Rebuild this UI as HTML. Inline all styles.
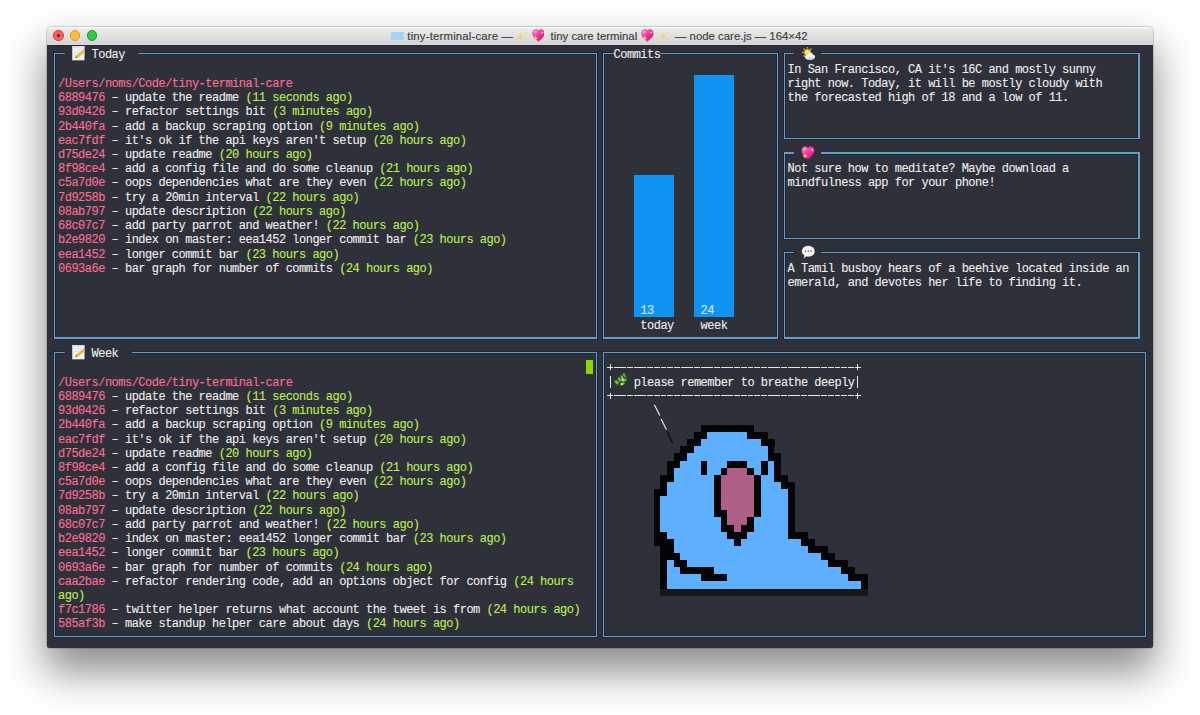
<!DOCTYPE html>
<html><head><meta charset="utf-8"><style>
html,body{margin:0;padding:0;background:#fff;width:1200px;height:715px;overflow:hidden;position:relative}
.win{position:absolute;left:47px;top:26.7px;width:1106px;height:621.3px;border-radius:4px 4px 3px 3px;background:#2f313a;box-shadow:0 22px 40px 2px rgba(0,0,0,0.45),0 0 0 0.5px rgba(0,0,0,0.3)}
.tb{position:absolute;left:47px;top:26.7px;width:1106px;height:18.3px;border-radius:4px 4px 0 0;background:linear-gradient(#eeeeee,#d5d5d5 92%,#dedde2);box-shadow:inset 0 1px 0 #fafafa}
.tbb{position:absolute;left:47px;top:45px;width:1106px;height:1px;background:#262530}
.t{position:absolute;white-space:pre;font-family:"Liberation Mono",monospace;font-size:12.0px;line-height:14.227px;letter-spacing:-0.507px;-webkit-text-stroke:0.1px currentColor}
.ln{position:absolute}
.dot{position:absolute;width:10.2px;height:10.2px;border-radius:50%}
.title{position:absolute;top:28.5px;height:15px;font-family:"Liberation Sans",sans-serif;font-size:11.4px;line-height:15px;color:#404040;-webkit-text-stroke:0.15px #404040;white-space:pre}
</style></head><body>
<div class="win"></div>
<div class="tb"></div>
<div class="tbb"></div>
<div class="dot" style="left:53.4px;top:30.4px;background:#fc605c;border:0.6px solid #d8403a;box-sizing:border-box"></div>
<div class="dot" style="left:70.15px;top:30.4px;background:#fdbc40;border:0.6px solid #d49a20;box-sizing:border-box"></div>
<div class="dot" style="left:86.9px;top:30.4px;background:#34c84a;border:0.6px solid #1e9a2c;box-sizing:border-box"></div>
<div style="position:absolute;left:56.6px;top:33.6px;width:3.8px;height:3.8px;border-radius:50%;background:#5a0806"></div>
<div style="position:absolute;left:391.3px;top:32px;width:12.4px;height:8.3px;background:#a3d4f2;border-radius:1px"></div>
<div class="title" style="left:407.3px;letter-spacing:0.17px">tiny-terminal-care</div><div class="title" style="left:501.5px">—</div>
<div class="title" style="left:550.5px">tiny care terminal</div>
<div class="title" style="left:675px">— node care.js — 164×42</div>
<div><div class="ln" style="left:53.17px;top:51.98px;width:12.46px;height:3.05px;background:rgba(22,38,58,0.75)"></div><div class="ln" style="left:137.46px;top:51.98px;width:460.90px;height:3.05px;background:rgba(22,38,58,0.75)"></div><div class="ln" style="left:53.17px;top:336.52px;width:545.18px;height:3.05px;background:rgba(22,38,58,0.75)"></div><div class="ln" style="left:53.17px;top:51.98px;width:3.05px;height:287.59px;background:rgba(22,38,58,0.75)"></div><div class="ln" style="left:595.30px;top:51.98px;width:3.05px;height:287.59px;background:rgba(22,38,58,0.75)"></div><div class="ln" style="left:53.17px;top:350.74px;width:12.46px;height:3.05px;background:rgba(22,38,58,0.75)"></div><div class="ln" style="left:130.77px;top:350.74px;width:467.59px;height:3.05px;background:rgba(22,38,58,0.75)"></div><div class="ln" style="left:53.17px;top:635.28px;width:545.18px;height:3.05px;background:rgba(22,38,58,0.75)"></div><div class="ln" style="left:53.17px;top:350.74px;width:3.05px;height:287.59px;background:rgba(22,38,58,0.75)"></div><div class="ln" style="left:595.30px;top:350.74px;width:3.05px;height:287.59px;background:rgba(22,38,58,0.75)"></div><div class="ln" style="left:602.00px;top:51.98px;width:12.46px;height:3.05px;background:rgba(22,38,58,0.75)"></div><div class="ln" style="left:659.51px;top:51.98px;width:119.55px;height:3.05px;background:rgba(22,38,58,0.75)"></div><div class="ln" style="left:602.00px;top:336.52px;width:177.07px;height:3.05px;background:rgba(22,38,58,0.75)"></div><div class="ln" style="left:602.00px;top:51.98px;width:3.05px;height:287.59px;background:rgba(22,38,58,0.75)"></div><div class="ln" style="left:776.02px;top:51.98px;width:3.05px;height:287.59px;background:rgba(22,38,58,0.75)"></div><div class="ln" style="left:782.71px;top:51.98px;width:12.46px;height:3.05px;background:rgba(22,38,58,0.75)"></div><div class="ln" style="left:820.14px;top:51.98px;width:320.34px;height:3.05px;background:rgba(22,38,58,0.75)"></div><div class="ln" style="left:782.71px;top:137.34px;width:357.78px;height:3.05px;background:rgba(22,38,58,0.75)"></div><div class="ln" style="left:782.71px;top:51.98px;width:3.05px;height:88.41px;background:rgba(22,38,58,0.75)"></div><div class="ln" style="left:1137.44px;top:51.98px;width:3.05px;height:88.41px;background:rgba(22,38,58,0.75)"></div><div class="ln" style="left:782.71px;top:151.56px;width:12.46px;height:3.05px;background:rgba(22,38,58,0.75)"></div><div class="ln" style="left:820.14px;top:151.56px;width:320.34px;height:3.05px;background:rgba(22,38,58,0.75)"></div><div class="ln" style="left:782.71px;top:236.93px;width:357.78px;height:3.05px;background:rgba(22,38,58,0.75)"></div><div class="ln" style="left:782.71px;top:151.56px;width:3.05px;height:88.41px;background:rgba(22,38,58,0.75)"></div><div class="ln" style="left:1137.44px;top:151.56px;width:3.05px;height:88.41px;background:rgba(22,38,58,0.75)"></div><div class="ln" style="left:782.71px;top:251.15px;width:12.46px;height:3.05px;background:rgba(22,38,58,0.75)"></div><div class="ln" style="left:820.14px;top:251.15px;width:320.34px;height:3.05px;background:rgba(22,38,58,0.75)"></div><div class="ln" style="left:782.71px;top:336.52px;width:357.78px;height:3.05px;background:rgba(22,38,58,0.75)"></div><div class="ln" style="left:782.71px;top:251.15px;width:3.05px;height:88.41px;background:rgba(22,38,58,0.75)"></div><div class="ln" style="left:1137.44px;top:251.15px;width:3.05px;height:88.41px;background:rgba(22,38,58,0.75)"></div><div class="ln" style="left:602.00px;top:350.74px;width:545.18px;height:3.05px;background:rgba(22,38,58,0.75)"></div><div class="ln" style="left:602.00px;top:635.28px;width:545.18px;height:3.05px;background:rgba(22,38,58,0.75)"></div><div class="ln" style="left:602.00px;top:350.74px;width:3.05px;height:287.59px;background:rgba(22,38,58,0.75)"></div><div class="ln" style="left:1144.13px;top:350.74px;width:3.05px;height:287.59px;background:rgba(22,38,58,0.75)"></div><div class="ln" style="left:54.07px;top:52.88px;width:10.66px;height:1.25px;background:#6a9cc8"></div><div class="ln" style="left:138.36px;top:52.88px;width:459.10px;height:1.25px;background:#6a9cc8"></div><div class="ln" style="left:54.07px;top:337.42px;width:543.38px;height:1.25px;background:#6a9cc8"></div><div class="ln" style="left:54.07px;top:52.88px;width:1.25px;height:285.79px;background:#6a9cc8"></div><div class="ln" style="left:596.20px;top:52.88px;width:1.25px;height:285.79px;background:#6a9cc8"></div><div class="ln" style="left:54.07px;top:351.64px;width:10.66px;height:1.25px;background:#6a9cc8"></div><div class="ln" style="left:131.67px;top:351.64px;width:465.79px;height:1.25px;background:#6a9cc8"></div><div class="ln" style="left:54.07px;top:636.18px;width:543.38px;height:1.25px;background:#6a9cc8"></div><div class="ln" style="left:54.07px;top:351.64px;width:1.25px;height:285.79px;background:#6a9cc8"></div><div class="ln" style="left:596.20px;top:351.64px;width:1.25px;height:285.79px;background:#6a9cc8"></div><div class="ln" style="left:602.90px;top:52.88px;width:10.66px;height:1.25px;background:#6a9cc8"></div><div class="ln" style="left:660.41px;top:52.88px;width:117.75px;height:1.25px;background:#6a9cc8"></div><div class="ln" style="left:602.90px;top:337.42px;width:175.27px;height:1.25px;background:#6a9cc8"></div><div class="ln" style="left:602.90px;top:52.88px;width:1.25px;height:285.79px;background:#6a9cc8"></div><div class="ln" style="left:776.92px;top:52.88px;width:1.25px;height:285.79px;background:#6a9cc8"></div><div class="ln" style="left:783.61px;top:52.88px;width:10.66px;height:1.25px;background:#6a9cc8"></div><div class="ln" style="left:821.04px;top:52.88px;width:318.54px;height:1.25px;background:#6a9cc8"></div><div class="ln" style="left:783.61px;top:138.24px;width:355.98px;height:1.25px;background:#6a9cc8"></div><div class="ln" style="left:783.61px;top:52.88px;width:1.25px;height:86.61px;background:#6a9cc8"></div><div class="ln" style="left:1138.34px;top:52.88px;width:1.25px;height:86.61px;background:#6a9cc8"></div><div class="ln" style="left:783.61px;top:152.46px;width:10.66px;height:1.25px;background:#6a9cc8"></div><div class="ln" style="left:821.04px;top:152.46px;width:318.54px;height:1.25px;background:#6a9cc8"></div><div class="ln" style="left:783.61px;top:237.83px;width:355.98px;height:1.25px;background:#6a9cc8"></div><div class="ln" style="left:783.61px;top:152.46px;width:1.25px;height:86.61px;background:#6a9cc8"></div><div class="ln" style="left:1138.34px;top:152.46px;width:1.25px;height:86.61px;background:#6a9cc8"></div><div class="ln" style="left:783.61px;top:252.05px;width:10.66px;height:1.25px;background:#6a9cc8"></div><div class="ln" style="left:821.04px;top:252.05px;width:318.54px;height:1.25px;background:#6a9cc8"></div><div class="ln" style="left:783.61px;top:337.42px;width:355.98px;height:1.25px;background:#6a9cc8"></div><div class="ln" style="left:783.61px;top:252.05px;width:1.25px;height:86.61px;background:#6a9cc8"></div><div class="ln" style="left:1138.34px;top:252.05px;width:1.25px;height:86.61px;background:#6a9cc8"></div><div class="ln" style="left:602.90px;top:351.64px;width:543.38px;height:1.25px;background:#6a9cc8"></div><div class="ln" style="left:602.90px;top:636.18px;width:543.38px;height:1.25px;background:#6a9cc8"></div><div class="ln" style="left:602.90px;top:351.64px;width:1.25px;height:285.79px;background:#6a9cc8"></div><div class="ln" style="left:1145.03px;top:351.64px;width:1.25px;height:285.79px;background:#6a9cc8"></div></div>
<div class="t" style="left:91.51px;top:48.40px;"><span style="color:#eeeeee">Today</span></div>
<div class="t" style="left:91.51px;top:347.17px;"><span style="color:#eeeeee">Week</span></div>
<div class="t" style="left:613.56px;top:48.40px;"><span style="color:#eeeeee">Commits</span></div>
<div class="t" style="left:58.04px;top:76.85px;"><span style="color:#ff6c96">/Users/noms/Code/tiny-terminal-care</span></div>
<div class="t" style="left:58.04px;top:91.08px;"><span style="color:#ff6c96">6889476</span><span style="color:#eeeeee"> – update the readme </span><span style="color:#bcf04e">(11 seconds ago)</span></div>
<div class="t" style="left:58.04px;top:105.31px;"><span style="color:#ff6c96">93d0426</span><span style="color:#eeeeee"> – refactor settings bit </span><span style="color:#bcf04e">(3 minutes ago)</span></div>
<div class="t" style="left:58.04px;top:119.54px;"><span style="color:#ff6c96">2b440fa</span><span style="color:#eeeeee"> – add a backup scraping option </span><span style="color:#bcf04e">(9 minutes ago)</span></div>
<div class="t" style="left:58.04px;top:133.76px;"><span style="color:#ff6c96">eac7fdf</span><span style="color:#eeeeee"> – it's ok if the api keys aren't setup </span><span style="color:#bcf04e">(20 hours ago)</span></div>
<div class="t" style="left:58.04px;top:147.99px;"><span style="color:#ff6c96">d75de24</span><span style="color:#eeeeee"> – update readme </span><span style="color:#bcf04e">(20 hours ago)</span></div>
<div class="t" style="left:58.04px;top:162.22px;"><span style="color:#ff6c96">8f98ce4</span><span style="color:#eeeeee"> – add a config file and do some cleanup </span><span style="color:#bcf04e">(21 hours ago)</span></div>
<div class="t" style="left:58.04px;top:176.44px;"><span style="color:#ff6c96">c5a7d0e</span><span style="color:#eeeeee"> – oops dependencies what are they even </span><span style="color:#bcf04e">(22 hours ago)</span></div>
<div class="t" style="left:58.04px;top:190.67px;"><span style="color:#ff6c96">7d9258b</span><span style="color:#eeeeee"> – try a 20min interval </span><span style="color:#bcf04e">(22 hours ago)</span></div>
<div class="t" style="left:58.04px;top:204.90px;"><span style="color:#ff6c96">08ab797</span><span style="color:#eeeeee"> – update description </span><span style="color:#bcf04e">(22 hours ago)</span></div>
<div class="t" style="left:58.04px;top:219.12px;"><span style="color:#ff6c96">68c07c7</span><span style="color:#eeeeee"> – add party parrot and weather! </span><span style="color:#bcf04e">(22 hours ago)</span></div>
<div class="t" style="left:58.04px;top:233.35px;"><span style="color:#ff6c96">b2e9820</span><span style="color:#eeeeee"> – index on master: eea1452 longer commit bar </span><span style="color:#bcf04e">(23 hours ago)</span></div>
<div class="t" style="left:58.04px;top:247.58px;"><span style="color:#ff6c96">eea1452</span><span style="color:#eeeeee"> – longer commit bar </span><span style="color:#bcf04e">(23 hours ago)</span></div>
<div class="t" style="left:58.04px;top:261.81px;"><span style="color:#ff6c96">0693a6e</span><span style="color:#eeeeee"> – bar graph for number of commits </span><span style="color:#bcf04e">(24 hours ago)</span></div>
<div class="t" style="left:58.04px;top:375.62px;"><span style="color:#ff6c96">/Users/noms/Code/tiny-terminal-care</span></div>
<div class="t" style="left:58.04px;top:389.85px;"><span style="color:#ff6c96">6889476</span><span style="color:#eeeeee"> – update the readme </span><span style="color:#bcf04e">(11 seconds ago)</span></div>
<div class="t" style="left:58.04px;top:404.08px;"><span style="color:#ff6c96">93d0426</span><span style="color:#eeeeee"> – refactor settings bit </span><span style="color:#bcf04e">(3 minutes ago)</span></div>
<div class="t" style="left:58.04px;top:418.30px;"><span style="color:#ff6c96">2b440fa</span><span style="color:#eeeeee"> – add a backup scraping option </span><span style="color:#bcf04e">(9 minutes ago)</span></div>
<div class="t" style="left:58.04px;top:432.53px;"><span style="color:#ff6c96">eac7fdf</span><span style="color:#eeeeee"> – it's ok if the api keys aren't setup </span><span style="color:#bcf04e">(20 hours ago)</span></div>
<div class="t" style="left:58.04px;top:446.76px;"><span style="color:#ff6c96">d75de24</span><span style="color:#eeeeee"> – update readme </span><span style="color:#bcf04e">(20 hours ago)</span></div>
<div class="t" style="left:58.04px;top:460.98px;"><span style="color:#ff6c96">8f98ce4</span><span style="color:#eeeeee"> – add a config file and do some cleanup </span><span style="color:#bcf04e">(21 hours ago)</span></div>
<div class="t" style="left:58.04px;top:475.21px;"><span style="color:#ff6c96">c5a7d0e</span><span style="color:#eeeeee"> – oops dependencies what are they even </span><span style="color:#bcf04e">(22 hours ago)</span></div>
<div class="t" style="left:58.04px;top:489.44px;"><span style="color:#ff6c96">7d9258b</span><span style="color:#eeeeee"> – try a 20min interval </span><span style="color:#bcf04e">(22 hours ago)</span></div>
<div class="t" style="left:58.04px;top:503.66px;"><span style="color:#ff6c96">08ab797</span><span style="color:#eeeeee"> – update description </span><span style="color:#bcf04e">(22 hours ago)</span></div>
<div class="t" style="left:58.04px;top:517.89px;"><span style="color:#ff6c96">68c07c7</span><span style="color:#eeeeee"> – add party parrot and weather! </span><span style="color:#bcf04e">(22 hours ago)</span></div>
<div class="t" style="left:58.04px;top:532.12px;"><span style="color:#ff6c96">b2e9820</span><span style="color:#eeeeee"> – index on master: eea1452 longer commit bar </span><span style="color:#bcf04e">(23 hours ago)</span></div>
<div class="t" style="left:58.04px;top:546.34px;"><span style="color:#ff6c96">eea1452</span><span style="color:#eeeeee"> – longer commit bar </span><span style="color:#bcf04e">(23 hours ago)</span></div>
<div class="t" style="left:58.04px;top:560.57px;"><span style="color:#ff6c96">0693a6e</span><span style="color:#eeeeee"> – bar graph for number of commits </span><span style="color:#bcf04e">(24 hours ago)</span></div>
<div class="t" style="left:58.04px;top:574.80px;"><span style="color:#ff6c96">caa2bae</span><span style="color:#eeeeee"> – refactor rendering code, add an options object for config </span><span style="color:#bcf04e">(24 hours</span></div>
<div class="t" style="left:58.04px;top:589.03px;"><span style="color:#bcf04e">ago)</span></div>
<div class="t" style="left:58.04px;top:603.25px;"><span style="color:#ff6c96">f7c1786</span><span style="color:#eeeeee"> – twitter helper returns what account the tweet is from </span><span style="color:#bcf04e">(24 hours ago)</span></div>
<div class="t" style="left:58.04px;top:617.48px;"><span style="color:#ff6c96">585af3b</span><span style="color:#eeeeee"> – make standup helper care about days </span><span style="color:#bcf04e">(24 hours ago)</span></div>
<div class="ln" style="left:586.4px;top:359.8px;width:6.8px;height:14px;background:#8ad800"></div>
<div class="ln" style="left:633.64px;top:174.64px;width:40.16px;height:142.27px;background:#1094f4"></div>
<div class="ln" style="left:693.88px;top:75.05px;width:40.16px;height:241.86px;background:#1094f4"></div>
<div class="t" style="left:640.33px;top:304.49px;"><span style="color:#d8ecff">13</span></div>
<div class="t" style="left:700.57px;top:304.49px;"><span style="color:#d8ecff">24</span></div>
<div class="t" style="left:640.33px;top:318.71px;"><span style="color:#eeeeee">today</span></div>
<div class="t" style="left:700.57px;top:318.71px;"><span style="color:#eeeeee">week</span></div>
<div class="t" style="left:787.58px;top:62.63px;"><span style="color:#eeeeee">In San Francisco, CA it's 16C and mostly sunny</span></div>
<div class="t" style="left:787.58px;top:76.85px;"><span style="color:#eeeeee">right now. Today, it will be mostly cloudy with</span></div>
<div class="t" style="left:787.58px;top:91.08px;"><span style="color:#eeeeee">the forecasted high of 18 and a low of 11.</span></div>
<div class="t" style="left:787.58px;top:162.22px;"><span style="color:#eeeeee">Not sure how to meditate? Maybe download a</span></div>
<div class="t" style="left:787.58px;top:176.44px;"><span style="color:#eeeeee">mindfulness app for your phone!</span></div>
<div class="t" style="left:787.58px;top:261.81px;"><span style="color:#eeeeee">A Tamil busboy hears of a beehive located inside an</span></div>
<div class="t" style="left:787.58px;top:276.03px;"><span style="color:#eeeeee">emerald, and devotes her life to finding it.</span></div>
<div class="ln" style="left:610.22px;top:366.70px;width:247.64px;height:1.2px;background:repeating-linear-gradient(90deg,#e4e4e4 0,#e4e4e4 5.893px,transparent 5.893px,transparent 6.693px);background-position:-2.95px 0"></div>
<div class="ln" style="left:607.22px;top:366.70px;width:6px;height:1.2px;background:#e8e8e8"></div>
<div class="ln" style="left:609.62px;top:364.10px;width:1.2px;height:6.4px;background:#e8e8e8"></div>
<div class="ln" style="left:854.86px;top:366.70px;width:6px;height:1.2px;background:#e8e8e8"></div>
<div class="ln" style="left:857.26px;top:364.10px;width:1.2px;height:6.4px;background:#e8e8e8"></div>
<div class="ln" style="left:610.22px;top:395.15px;width:247.64px;height:1.2px;background:repeating-linear-gradient(90deg,#e4e4e4 0,#e4e4e4 5.893px,transparent 5.893px,transparent 6.693px);background-position:-2.95px 0"></div>
<div class="ln" style="left:607.22px;top:395.15px;width:6px;height:1.2px;background:#e8e8e8"></div>
<div class="ln" style="left:609.62px;top:392.55px;width:1.2px;height:6.4px;background:#e8e8e8"></div>
<div class="ln" style="left:854.86px;top:395.15px;width:6px;height:1.2px;background:#e8e8e8"></div>
<div class="ln" style="left:857.26px;top:392.55px;width:1.2px;height:6.4px;background:#e8e8e8"></div>
<div class="ln" style="left:609.72px;top:376px;width:1.0px;height:12.4px;background:#e8e8e8"></div>
<div class="ln" style="left:857.36px;top:376px;width:1.0px;height:12.4px;background:#e8e8e8"></div>
<div class="t" style="left:626.95px;top:375.62px;"><span style="color:#eeeeee"> please remember to breathe deeply</span></div>
<svg class="ln" style="left:0;top:0" width="1200" height="715"><g stroke-linecap="round"><line x1="654.6" y1="405.3" x2="659.6" y2="415" stroke="#e8e8e8" stroke-width="1.2"/><line x1="661.3" y1="419.5" x2="666.3" y2="429.2" stroke="#e8e8e8" stroke-width="1.2"/><line x1="667.2" y1="431.5" x2="672.5" y2="443" stroke="#0a0a0a" stroke-width="1.2"/></g></svg>
<svg class="ln" style="left:0;top:0" width="1200" height="715" shape-rendering="crispEdges"><rect x="700.57" y="425.00" width="53.84" height="7.41" fill="#050505"/><rect x="693.88" y="432.11" width="13.69" height="7.41" fill="#050505"/><rect x="707.26" y="432.11" width="40.46" height="7.41" fill="#5fafff"/><rect x="747.42" y="432.11" width="20.38" height="7.41" fill="#050505"/><rect x="687.18" y="439.22" width="13.69" height="7.41" fill="#050505"/><rect x="700.57" y="439.22" width="60.54" height="7.41" fill="#5fafff"/><rect x="760.81" y="439.22" width="13.69" height="7.41" fill="#050505"/><rect x="680.49" y="446.33" width="13.69" height="7.41" fill="#050505"/><rect x="693.88" y="446.33" width="73.92" height="7.41" fill="#5fafff"/><rect x="767.50" y="446.33" width="6.99" height="7.41" fill="#050505"/><rect x="673.80" y="453.44" width="13.69" height="7.41" fill="#050505"/><rect x="687.18" y="453.44" width="80.62" height="7.41" fill="#5fafff"/><rect x="767.50" y="453.44" width="13.69" height="7.41" fill="#050505"/><rect x="667.11" y="460.55" width="13.69" height="7.41" fill="#050505"/><rect x="680.49" y="460.55" width="20.38" height="7.41" fill="#5fafff"/><rect x="700.57" y="460.55" width="6.99" height="7.41" fill="#050505"/><rect x="707.26" y="460.55" width="20.38" height="7.41" fill="#5fafff"/><rect x="727.34" y="460.55" width="20.38" height="7.41" fill="#050505"/><rect x="747.42" y="460.55" width="13.69" height="7.41" fill="#5fafff"/><rect x="760.81" y="460.55" width="6.99" height="7.41" fill="#050505"/><rect x="767.50" y="460.55" width="6.99" height="7.41" fill="#5fafff"/><rect x="774.19" y="460.55" width="6.99" height="7.41" fill="#050505"/><rect x="667.11" y="467.66" width="6.99" height="7.41" fill="#050505"/><rect x="673.80" y="467.66" width="27.07" height="7.41" fill="#5fafff"/><rect x="700.57" y="467.66" width="6.99" height="7.41" fill="#050505"/><rect x="707.26" y="467.66" width="13.69" height="7.41" fill="#5fafff"/><rect x="720.65" y="467.66" width="6.99" height="7.41" fill="#050505"/><rect x="727.34" y="467.66" width="20.38" height="7.41" fill="#af5f87"/><rect x="747.42" y="467.66" width="6.99" height="7.41" fill="#050505"/><rect x="754.12" y="467.66" width="6.99" height="7.41" fill="#5fafff"/><rect x="760.81" y="467.66" width="6.99" height="7.41" fill="#050505"/><rect x="767.50" y="467.66" width="6.99" height="7.41" fill="#5fafff"/><rect x="774.19" y="467.66" width="6.99" height="7.41" fill="#050505"/><rect x="660.41" y="474.77" width="13.69" height="7.41" fill="#050505"/><rect x="673.80" y="474.77" width="40.46" height="7.41" fill="#5fafff"/><rect x="713.96" y="474.77" width="6.99" height="7.41" fill="#050505"/><rect x="720.65" y="474.77" width="33.76" height="7.41" fill="#af5f87"/><rect x="754.12" y="474.77" width="6.99" height="7.41" fill="#050505"/><rect x="760.81" y="474.77" width="13.69" height="7.41" fill="#5fafff"/><rect x="774.19" y="474.77" width="13.69" height="7.41" fill="#050505"/><rect x="660.41" y="481.88" width="6.99" height="7.41" fill="#050505"/><rect x="667.11" y="481.88" width="47.15" height="7.41" fill="#5fafff"/><rect x="713.96" y="481.88" width="6.99" height="7.41" fill="#050505"/><rect x="720.65" y="481.88" width="33.76" height="7.41" fill="#af5f87"/><rect x="754.12" y="481.88" width="6.99" height="7.41" fill="#050505"/><rect x="760.81" y="481.88" width="20.38" height="7.41" fill="#5fafff"/><rect x="780.89" y="481.88" width="13.69" height="7.41" fill="#050505"/><rect x="653.72" y="488.99" width="13.69" height="7.41" fill="#050505"/><rect x="667.11" y="488.99" width="47.15" height="7.41" fill="#5fafff"/><rect x="713.96" y="488.99" width="6.99" height="7.41" fill="#050505"/><rect x="720.65" y="488.99" width="33.76" height="7.41" fill="#af5f87"/><rect x="754.12" y="488.99" width="6.99" height="7.41" fill="#050505"/><rect x="760.81" y="488.99" width="27.07" height="7.41" fill="#5fafff"/><rect x="787.58" y="488.99" width="6.99" height="7.41" fill="#050505"/><rect x="653.72" y="496.10" width="6.99" height="7.41" fill="#050505"/><rect x="660.41" y="496.10" width="53.84" height="7.41" fill="#5fafff"/><rect x="713.96" y="496.10" width="6.99" height="7.41" fill="#050505"/><rect x="720.65" y="496.10" width="33.76" height="7.41" fill="#af5f87"/><rect x="754.12" y="496.10" width="6.99" height="7.41" fill="#050505"/><rect x="760.81" y="496.10" width="27.07" height="7.41" fill="#5fafff"/><rect x="787.58" y="496.10" width="6.99" height="7.41" fill="#050505"/><rect x="653.72" y="503.21" width="6.99" height="7.41" fill="#050505"/><rect x="660.41" y="503.21" width="53.84" height="7.41" fill="#5fafff"/><rect x="713.96" y="503.21" width="6.99" height="7.41" fill="#050505"/><rect x="720.65" y="503.21" width="33.76" height="7.41" fill="#af5f87"/><rect x="754.12" y="503.21" width="6.99" height="7.41" fill="#050505"/><rect x="760.81" y="503.21" width="27.07" height="7.41" fill="#5fafff"/><rect x="787.58" y="503.21" width="6.99" height="7.41" fill="#050505"/><rect x="653.72" y="510.32" width="6.99" height="7.41" fill="#050505"/><rect x="660.41" y="510.32" width="53.84" height="7.41" fill="#5fafff"/><rect x="713.96" y="510.32" width="13.69" height="7.41" fill="#050505"/><rect x="727.34" y="510.32" width="27.07" height="7.41" fill="#af5f87"/><rect x="754.12" y="510.32" width="6.99" height="7.41" fill="#050505"/><rect x="760.81" y="510.32" width="27.07" height="7.41" fill="#5fafff"/><rect x="787.58" y="510.32" width="6.99" height="7.41" fill="#050505"/><rect x="653.72" y="517.43" width="6.99" height="7.41" fill="#050505"/><rect x="660.41" y="517.43" width="60.54" height="7.41" fill="#5fafff"/><rect x="720.65" y="517.43" width="6.99" height="7.41" fill="#050505"/><rect x="727.34" y="517.43" width="20.38" height="7.41" fill="#af5f87"/><rect x="747.42" y="517.43" width="6.99" height="7.41" fill="#050505"/><rect x="754.12" y="517.43" width="33.76" height="7.41" fill="#5fafff"/><rect x="787.58" y="517.43" width="6.99" height="7.41" fill="#050505"/><rect x="653.72" y="524.54" width="6.99" height="7.41" fill="#050505"/><rect x="660.41" y="524.54" width="60.54" height="7.41" fill="#5fafff"/><rect x="720.65" y="524.54" width="13.69" height="7.41" fill="#050505"/><rect x="734.04" y="524.54" width="6.99" height="7.41" fill="#af5f87"/><rect x="740.73" y="524.54" width="13.69" height="7.41" fill="#050505"/><rect x="754.12" y="524.54" width="33.76" height="7.41" fill="#5fafff"/><rect x="787.58" y="524.54" width="6.99" height="7.41" fill="#050505"/><rect x="653.72" y="531.65" width="13.69" height="7.41" fill="#050505"/><rect x="667.11" y="531.65" width="60.54" height="7.41" fill="#5fafff"/><rect x="727.34" y="531.65" width="20.38" height="7.41" fill="#050505"/><rect x="747.42" y="531.65" width="40.46" height="7.41" fill="#5fafff"/><rect x="787.58" y="531.65" width="20.38" height="7.41" fill="#050505"/><rect x="653.72" y="538.76" width="20.38" height="7.41" fill="#050505"/><rect x="673.80" y="538.76" width="60.54" height="7.41" fill="#5fafff"/><rect x="734.04" y="538.76" width="6.99" height="7.41" fill="#050505"/><rect x="740.73" y="538.76" width="60.54" height="7.41" fill="#5fafff"/><rect x="800.97" y="538.76" width="13.69" height="7.41" fill="#050505"/><rect x="660.41" y="545.87" width="13.69" height="7.41" fill="#050505"/><rect x="673.80" y="545.87" width="134.16" height="7.41" fill="#5fafff"/><rect x="807.66" y="545.87" width="20.38" height="7.41" fill="#050505"/><rect x="660.41" y="552.98" width="20.38" height="7.41" fill="#050505"/><rect x="680.49" y="552.98" width="140.85" height="7.41" fill="#5fafff"/><rect x="821.04" y="552.98" width="13.69" height="7.41" fill="#050505"/><rect x="660.41" y="560.09" width="6.99" height="7.41" fill="#050505"/><rect x="667.11" y="560.09" width="6.99" height="7.41" fill="#5fafff"/><rect x="673.80" y="560.09" width="13.69" height="7.41" fill="#050505"/><rect x="687.18" y="560.09" width="140.85" height="7.41" fill="#5fafff"/><rect x="827.74" y="560.09" width="20.38" height="7.41" fill="#050505"/><rect x="660.41" y="567.20" width="6.99" height="7.41" fill="#050505"/><rect x="667.11" y="567.20" width="13.69" height="7.41" fill="#5fafff"/><rect x="680.49" y="567.20" width="33.76" height="7.41" fill="#050505"/><rect x="713.96" y="567.20" width="127.47" height="7.41" fill="#5fafff"/><rect x="841.12" y="567.20" width="13.69" height="7.41" fill="#050505"/><rect x="660.41" y="574.31" width="6.99" height="7.41" fill="#050505"/><rect x="667.11" y="574.31" width="33.76" height="7.41" fill="#5fafff"/><rect x="700.57" y="574.31" width="27.07" height="7.41" fill="#050505"/><rect x="727.34" y="574.31" width="120.77" height="7.41" fill="#5fafff"/><rect x="847.82" y="574.31" width="20.38" height="7.41" fill="#050505"/><rect x="660.41" y="581.42" width="6.99" height="7.41" fill="#050505"/><rect x="667.11" y="581.42" width="194.40" height="7.41" fill="#5fafff"/><rect x="861.20" y="581.42" width="6.99" height="7.41" fill="#050505"/><rect x="660.41" y="588.53" width="207.78" height="7.41" fill="#171717"/></svg>
<svg class="ln" style="left:72.2px;top:46.4px" width="13" height="14.6" viewBox="0 0 13 14.6"><rect x="0.3" y="0.3" width="12" height="13.8" fill="#f3f2f7" stroke="#c9c6d2" stroke-width="0.5"/><rect x="0.3" y="0.3" width="12" height="1.6" fill="#e6e2ee"/><g stroke="#c8cde8" stroke-width="0.5"><line x1="1.6" y1="4" x2="11" y2="4"/><line x1="1.6" y1="6.5" x2="11" y2="6.5"/><line x1="1.6" y1="9" x2="7" y2="9"/><line x1="1.6" y1="11.5" x2="5" y2="11.5"/></g><polygon points="3.4,12.2 4.2,9.6 10.6,4.2 12.6,6.4 6.2,11.8" fill="#f2c53a"/><polygon points="10.6,4.2 11.6,3.4 13,5.2 12.6,6.4" fill="#e9a0a0"/><polygon points="3.4,12.2 4.2,9.6 5.2,11.4" fill="#6b5a3a"/><line x1="4.6" y1="10.6" x2="11.6" y2="5.2" stroke="#d89a20" stroke-width="0.7"/></svg>
<svg class="ln" style="left:72.2px;top:345.167px" width="13" height="14.6" viewBox="0 0 13 14.6"><rect x="0.3" y="0.3" width="12" height="13.8" fill="#f3f2f7" stroke="#c9c6d2" stroke-width="0.5"/><rect x="0.3" y="0.3" width="12" height="1.6" fill="#e6e2ee"/><g stroke="#c8cde8" stroke-width="0.5"><line x1="1.6" y1="4" x2="11" y2="4"/><line x1="1.6" y1="6.5" x2="11" y2="6.5"/><line x1="1.6" y1="9" x2="7" y2="9"/><line x1="1.6" y1="11.5" x2="5" y2="11.5"/></g><polygon points="3.4,12.2 4.2,9.6 10.6,4.2 12.6,6.4 6.2,11.8" fill="#f2c53a"/><polygon points="10.6,4.2 11.6,3.4 13,5.2 12.6,6.4" fill="#e9a0a0"/><polygon points="3.4,12.2 4.2,9.6 5.2,11.4" fill="#6b5a3a"/><line x1="4.6" y1="10.6" x2="11.6" y2="5.2" stroke="#d89a20" stroke-width="0.7"/></svg>
<svg class="ln" style="left:801.3px;top:47.0px" width="14" height="13.4" viewBox="0 0 14 13.4"><g fill="#f5e6b0" stroke="#3a2a10" stroke-width="0.4"><circle cx="2" cy="5.5" r="0.9"/><circle cx="3.2" cy="2.2" r="0.9"/><circle cx="6.5" cy="0.9" r="0.9"/><circle cx="9.8" cy="2.2" r="0.9"/><circle cx="3.2" cy="9" r="0.9"/></g><circle cx="6.5" cy="5.5" r="3.6" fill="#f7d23a" stroke="#5a3a00" stroke-width="0.5"/><circle cx="6" cy="4.8" r="2" fill="#fbe36a"/><g fill="#f4f6fa"><ellipse cx="8.8" cy="10.2" rx="4.6" ry="2.6"/><circle cx="9.6" cy="8.4" r="2.6"/><circle cx="6.4" cy="9.8" r="2"/><circle cx="12" cy="9.8" r="2"/></g><ellipse cx="9.5" cy="11.2" rx="3.5" ry="1.2" fill="#c9d8ea"/></svg>
<svg class="ln" style="left:801.3px;top:145.8px" width="14.0" height="14.0" viewBox="0 0 14 14"><defs><linearGradient id="h1g" x1="0" y1="0" x2="1" y2="1"><stop offset="0" stop-color="#ff8fd0"/><stop offset="0.55" stop-color="#f22aa0"/><stop offset="1" stop-color="#c8106a"/></linearGradient></defs><path d="M7 13.4 C3.2 10.4 0.6 8 0.6 4.6 C0.6 2.2 2.3 0.6 4.3 0.6 C5.5 0.6 6.5 1.3 7 2.3 C7.5 1.3 8.5 0.6 9.7 0.6 C11.7 0.6 13.4 2.2 13.4 4.6 C13.4 8 10.8 10.4 7 13.4 Z" fill="url(#h1g)" stroke="#a8105a" stroke-width="0.4"/><ellipse cx="3.8" cy="3.2" rx="1.6" ry="1" fill="#ffc0e6" opacity="0.8"/><path d="M11.2 2.2 L11.7 3.6 L13 4 L11.7 4.4 L11.2 5.8 L10.7 4.4 L9.4 4 L10.7 3.6 Z" fill="#ffe070"/><path d="M4 7.2 L4.8 9.2 L6.8 10 L4.8 10.8 L4 12.8 L3.2 10.8 L1.2 10 L3.2 9.2 Z" fill="#ffd84a"/></svg>
<svg class="ln" style="left:801.0px;top:245.0px" width="14.6" height="15" viewBox="0 0 14.6 15"><path d="M1.8 14.4 L3.2 10.6 C1.6 9.6 0.6 8 0.6 6.3 C0.6 3 3.5 0.6 7.3 0.6 C11.1 0.6 14 3 14 6.3 C14 9.6 11.1 12 7.3 12 C6.6 12 5.9 11.9 5.3 11.8 Z" fill="#f7f7f9" stroke="#1a1a1a" stroke-width="0.6"/><g fill="#6a6a72"><rect x="3.9" y="5.3" width="1.3" height="1.6"/><rect x="6.7" y="5.3" width="1.3" height="1.6"/><rect x="9.5" y="5.3" width="1.3" height="1.6"/></g></svg>
<svg class="ln" style="left:613.2px;top:372.4px" width="14.740000000000002" height="15.840000000000002" viewBox="0 0 13.4 14.4"><g fill="#72c04a" stroke="#1e4a14" stroke-width="0.35"><ellipse cx="3.5" cy="9.5" rx="2.6" ry="1.5" transform="rotate(45 3.5 9.5)"/><ellipse cx="6" cy="7" rx="2.6" ry="1.4" transform="rotate(60 6 7)"/><ellipse cx="8.2" cy="5" rx="2.4" ry="1.3" transform="rotate(65 8.2 5)"/><ellipse cx="10.4" cy="3" rx="2.2" ry="1.2" transform="rotate(60 10.4 3)"/><ellipse cx="10.6" cy="7.4" rx="2.2" ry="1.3" transform="rotate(-20 10.6 7.4)"/><ellipse cx="8.6" cy="10.8" rx="2.4" ry="1.4" transform="rotate(-25 8.6 10.8)"/></g><path d="M3 13 L11.6 2" stroke="#2d6a1c" stroke-width="0.8"/><ellipse cx="8.8" cy="7" rx="1" ry="1.6" fill="#d8f0c8"/><ellipse cx="8" cy="11" rx="1" ry="1" fill="#c8ecb0"/></svg>
<svg class="ln" style="left:531.5px;top:28.8px" width="12.88" height="12.88" viewBox="0 0 14 14"><defs><linearGradient id="h2g" x1="0" y1="0" x2="1" y2="1"><stop offset="0" stop-color="#ff8fd0"/><stop offset="0.55" stop-color="#f22aa0"/><stop offset="1" stop-color="#c8106a"/></linearGradient></defs><path d="M7 13.4 C3.2 10.4 0.6 8 0.6 4.6 C0.6 2.2 2.3 0.6 4.3 0.6 C5.5 0.6 6.5 1.3 7 2.3 C7.5 1.3 8.5 0.6 9.7 0.6 C11.7 0.6 13.4 2.2 13.4 4.6 C13.4 8 10.8 10.4 7 13.4 Z" fill="url(#h2g)" stroke="#a8105a" stroke-width="0.4"/><ellipse cx="3.8" cy="3.2" rx="1.6" ry="1" fill="#ffc0e6" opacity="0.8"/><path d="M11.2 2.2 L11.7 3.6 L13 4 L11.7 4.4 L11.2 5.8 L10.7 4.4 L9.4 4 L10.7 3.6 Z" fill="#ffe070"/><path d="M4 7.2 L4.8 9.2 L6.8 10 L4.8 10.8 L4 12.8 L3.2 10.8 L1.2 10 L3.2 9.2 Z" fill="#ffd84a"/></svg><svg class="ln" style="left:641.3px;top:28.8px" width="12.88" height="12.88" viewBox="0 0 14 14"><defs><linearGradient id="h3g" x1="0" y1="0" x2="1" y2="1"><stop offset="0" stop-color="#ff8fd0"/><stop offset="0.55" stop-color="#f22aa0"/><stop offset="1" stop-color="#c8106a"/></linearGradient></defs><path d="M7 13.4 C3.2 10.4 0.6 8 0.6 4.6 C0.6 2.2 2.3 0.6 4.3 0.6 C5.5 0.6 6.5 1.3 7 2.3 C7.5 1.3 8.5 0.6 9.7 0.6 C11.7 0.6 13.4 2.2 13.4 4.6 C13.4 8 10.8 10.4 7 13.4 Z" fill="url(#h3g)" stroke="#a8105a" stroke-width="0.4"/><ellipse cx="3.8" cy="3.2" rx="1.6" ry="1" fill="#ffc0e6" opacity="0.8"/><path d="M11.2 2.2 L11.7 3.6 L13 4 L11.7 4.4 L11.2 5.8 L10.7 4.4 L9.4 4 L10.7 3.6 Z" fill="#ffe070"/><path d="M4 7.2 L4.8 9.2 L6.8 10 L4.8 10.8 L4 12.8 L3.2 10.8 L1.2 10 L3.2 9.2 Z" fill="#ffd84a"/></svg><svg class="ln" style="left:515px;top:29.5px" width="13.0" height="13.0" viewBox="0 0 13 13"><g fill="#f2d830" opacity="0.6"><path d="M6 2 L7.2 5.6 L10.8 6.8 L7.2 8 L6 11.6 L4.8 8 L1.2 6.8 L4.8 5.6 Z"/><path d="M10.5 0.5 L11 2 L12.5 2.5 L11 3 L10.5 4.5 L10 3 L8.5 2.5 L10 2 Z"/><path d="M2.5 9.5 L2.9 10.7 L4.1 11.1 L2.9 11.5 L2.5 12.7 L2.1 11.5 L0.9 11.1 L2.1 10.7 Z"/></g></svg><svg class="ln" style="left:657px;top:30px" width="12.35" height="12.35" viewBox="0 0 13 13"><g fill="#f2d830" opacity="0.6"><path d="M6 2 L7.2 5.6 L10.8 6.8 L7.2 8 L6 11.6 L4.8 8 L1.2 6.8 L4.8 5.6 Z"/><path d="M10.5 0.5 L11 2 L12.5 2.5 L11 3 L10.5 4.5 L10 3 L8.5 2.5 L10 2 Z"/><path d="M2.5 9.5 L2.9 10.7 L4.1 11.1 L2.9 11.5 L2.5 12.7 L2.1 11.5 L0.9 11.1 L2.1 10.7 Z"/></g></svg>
</body></html>
